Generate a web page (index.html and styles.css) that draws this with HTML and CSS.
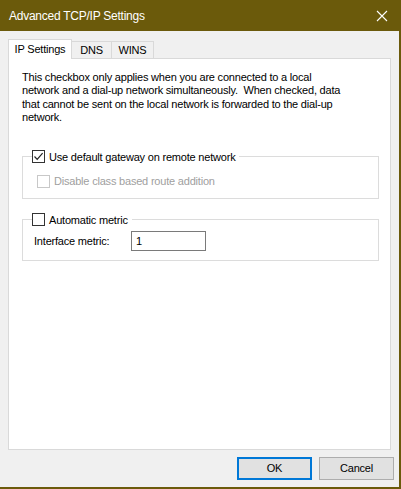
FILE: index.html
```html
<!DOCTYPE html>
<html>
<head>
<meta charset="utf-8">
<link rel="stylesheet" href="styles.css">
</head>
<body>
<div class="window">
  <div class="titlebar">
    <span class="title">Advanced TCP/IP Settings</span>
    <svg class="close" width="12" height="12" viewBox="0 0 12 12"><path d="M1 1 L11 11 M11 1 L1 11" stroke="#ffffff" stroke-width="1.1" fill="none"/></svg>
  </div>
  <div class="body">
    <div class="tabs">
      <div class="tab active">IP Settings</div>
      <div class="tab dns">DNS</div>
      <div class="tab wins">WINS</div>
    </div>
    <div class="panel">
      <p class="info">This checkbox only applies when you are connected to a local<br>network and a dial-up network simultaneously.&nbsp; When checked, data that cannot be sent on the local network is forwarded to the dial-up network.</p>
      <fieldset class="group first">
        <legend><span class="check checked"><svg width="11" height="11" viewBox="0 0 11 11"><path d="M1.5 5.5 L4.2 8.3 L9.6 2.2" stroke="#222" stroke-width="1.2" fill="none"/></svg></span>Use default gateway on remote network</legend>
        <div class="row disabled"><span class="check"></span>Disable class based route addition</div>
      </fieldset>
      <fieldset class="group second">
        <legend><span class="check"></span>Automatic metric</legend>
        <div class="row metric"><span class="label">Interface metric:</span><span class="input">1</span></div>
      </fieldset>
    </div>
    <div class="buttons">
      <div class="btn default">OK</div>
      <div class="btn">Cancel</div>
    </div>
  </div>
</div>
</body>
</html>
```
FILE: styles.css
```css
html, body {
  margin: 0;
  padding: 0;
  background: #f0f0f0;
  font-family: "Liberation Sans", Arial, sans-serif;
  font-size: 11px;
  letter-spacing: -0.2px;
  color: #000;
}
.window {
  width: 399px;
  height: 487px;
  border-right: 2px solid #6b5a0b;
  border-bottom: 2px solid #6b5a0b;
  display: flex;
  flex-direction: column;
  overflow: hidden;
}
.titlebar {
  height: 31px;
  flex: none;
  background: #6b5a0b;
  color: #fff;
  display: flex;
  align-items: center;
  justify-content: space-between;
  padding: 0 11px 0 9px;
}
.title {
  font-size: 12px;
  letter-spacing: -0.25px;
}
.body {
  padding: 8px 0 0 8px;
  flex: 1;
  display: flex;
  flex-direction: column;
}
.tabs {
  display: flex;
  align-items: flex-end;
  height: 19px;
  position: relative;
  z-index: 1;
}
.tab {
  height: 17px;
  line-height: 16px;
  border: 1px solid #d9d9d9;
  border-bottom: none;
  border-left: none;
  background: #f0f0f0;
  box-sizing: border-box;
  text-align: center;
}
.tab.active {
  width: 64px;
  height: 20px;
  line-height: 18px;
  background: #fff;
  border-left: 1px solid #d9d9d9;
  margin-bottom: -1px;
}
.tab.dns {
  width: 40px;
}
.tab.wins {
  width: 42px;
}
.panel {
  border: 1px solid #d9d9d9;
  background: #fff;
  padding: 0 13px;
  box-sizing: border-box;
  width: 383px;
  height: 392px;
}
.info {
  margin: 12px 0 0 0;
  line-height: 13.4px;
  width: 335px;
}
.group {
  margin: 0;
  padding: 0 9px;
  border: 1px solid #dcdcdc;
  width: 357px;
  box-sizing: border-box;
}
.group.first {
  margin-top: 25px;
  height: 49px;
}
.group.second {
  margin-top: 14px;
  height: 48px;
}
legend {
  padding: 0 4px 0 0;
  display: flex;
  align-items: center;
  line-height: 14px;
}
.check {
  width: 13px;
  height: 13px;
  border: 1px solid #333;
  box-sizing: border-box;
  margin-right: 4px;
  display: inline-flex;
  align-items: center;
  justify-content: center;
  background: #fff;
}
.row {
  display: flex;
  align-items: center;
  margin-top: 11px;
}
.row.disabled {
  color: #a0a0a0;
  padding-left: 5px;
}
.row.disabled .check {
  border-color: #c8c8c8;
}
.metric {
  margin-top: 4px;
  padding-left: 2px;
}
.label {
  width: 97px;
}
.input {
  width: 75px;
  height: 20px;
  border: 1px solid #7a7a7a;
  box-sizing: border-box;
  padding-left: 4px;
  line-height: 18px;
}
.buttons {
  display: flex;
  justify-content: flex-end;
  gap: 7px;
  padding: 7px 5px 0 0;
}
.btn {
  width: 75px;
  height: 23px;
  box-sizing: border-box;
  border: 1px solid #adadad;
  background: #e1e1e1;
  text-align: center;
  line-height: 21px;
}
.btn.default {
  border: 2px solid #0078d7;
  line-height: 19px;
}
```
